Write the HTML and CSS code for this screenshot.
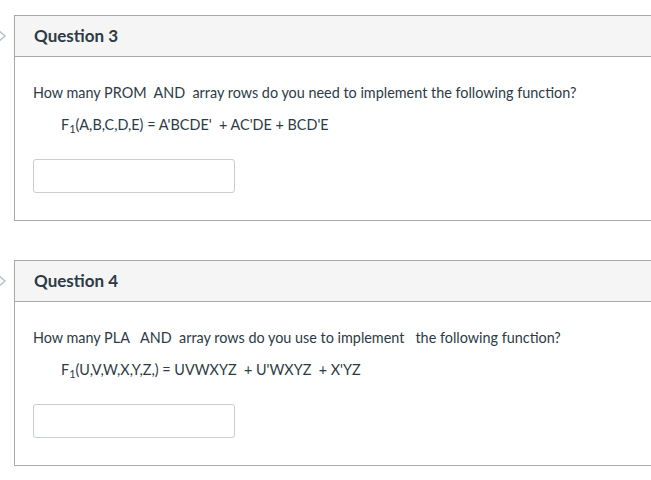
FILE: index.html
```html
<!DOCTYPE html>
<html lang="en">
<head>
<meta charset="utf-8">
<title>Quiz</title>
<link rel="stylesheet" href="styles.css">
</head>
<body>
<div class="page">
  <div class="question-row">
    <svg class="chevron" width="8" height="14" viewBox="0 0 8 14"><polyline points="-2,1 5,7 -2,13" fill="none" stroke="#b9c2c9" stroke-width="1.5"/></svg>
    <div class="question">
      <div class="question-header">Question 3</div>
      <div class="question-body">
        <p class="prompt">How many PROM  AND  array rows do you need to implement the following function?</p>
        <p class="formula">F<sub>1</sub>(A,B,C,D,E) = A'BCDE'  + AC'DE + BCD'E</p>
        <div class="answer"></div>
      </div>
    </div>
  </div>
  <div class="question-row">
    <svg class="chevron" width="8" height="14" viewBox="0 0 8 14"><polyline points="-2,1 5,7 -2,13" fill="none" stroke="#b9c2c9" stroke-width="1.5"/></svg>
    <div class="question">
      <div class="question-header">Question 4</div>
      <div class="question-body">
        <p class="prompt">How many PLA   AND  array rows do you use to implement   the following function?</p>
        <p class="formula">F<sub>1</sub>(U,V,W,X,Y,Z,) = UVWXYZ  + U'WXYZ  + X'YZ</p>
        <div class="answer"></div>
      </div>
    </div>
  </div>
</div>
</body>
</html>
```

FILE: styles.css
```css
html, body {
  margin: 0;
  padding: 0;
  background: #ffffff;
  overflow: hidden;
}
body {
  font-family: Lato, "Liberation Sans", sans-serif;
  color: #2d3b45;
}
.page {
  padding-top: 15px;
  display: flex;
  flex-direction: column;
  gap: 39px;
}
.question-row {
  position: relative;
  padding-left: 14px;
}
.chevron {
  position: absolute;
  left: 0;
  top: 14px;
}
.question {
  width: 660px;
  border: 1px solid #a9a9a9;
  background: #fff;
}
.question-header {
  height: 40px;
  line-height: 39px;
  background: #f5f5f5;
  border-bottom: 1px solid #a9a9a9;
  padding-left: 19px;
  font-size: 17px;
  font-weight: 700;
  color: #2d3b45;
}
.question-body {
  padding: 26px 19px 27px 18px;
}
.prompt, .formula {
  margin: 0;
  font-size: 14.4px;
  line-height: 20px;
  white-space: pre-wrap;
}
.formula {
  margin-top: 12px;
  padding-left: 28px;
}
.formula sub {
  font-size: 11px;
  line-height: 0;
  vertical-align: -3px;
}
.answer {
  margin-top: 24px;
  width: 200px;
  height: 32px;
  border: 1px solid #c7cdd1;
  border-radius: 3px;
  background: #fff;
}
```
